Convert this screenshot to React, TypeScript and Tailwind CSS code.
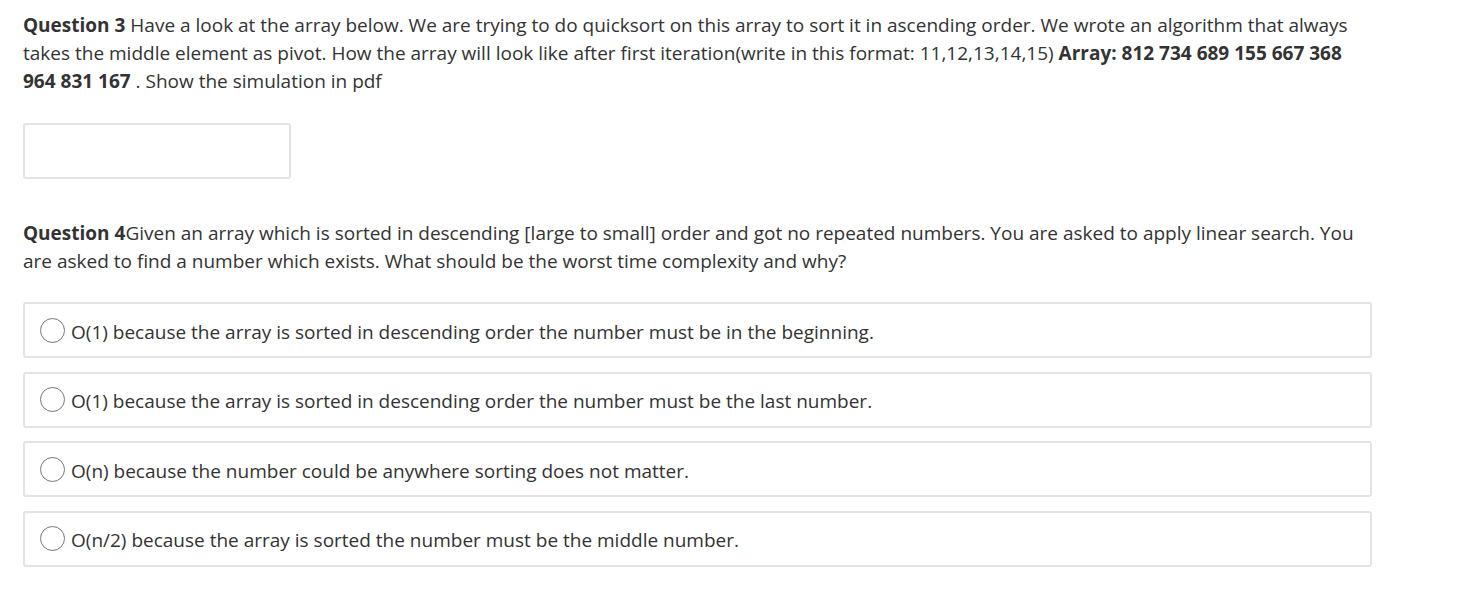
import React from 'react';

const options = [
  'O(1) because the array is sorted in descending order the number must be in the beginning.',
  'O(1) because the array is sorted in descending order the number must be the last number.',
  'O(n) because the number could be anywhere sorting does not matter.',
  'O(n/2) because the array is sorted the number must be the middle number.',
];

export default function App() {
  return (
    <div
      className="min-h-screen bg-white text-[#333] text-[19px] leading-[28px]"
      style={{ fontFamily: '"Open Sans", "Noto Sans", sans-serif' }}
    >
      <div className="w-[1349px] pl-[23px] pt-[11px] box-content">
        {/* Question 3 */}
        <p>
          <b>Question 3</b> Have a look at the array below. We are trying to do quicksort on this array to sort it in
          ascending order. We wrote an algorithm that always takes the middle element as pivot. How the array will look
          like after first iteration(write in this format: 11,12,13,14,15) <b>Array: 812 734 689 155 667 368 964 831 167</b> . Show
          the simulation in pdf
        </p>
        <div className="mt-[28px] w-[268px] h-[56px] border-2 border-[#e4e4e4] rounded-[3px]" />

        {/* Question 4 */}
        <p className="mt-[40px]">
          <b>Question 4</b>Given an array which is sorted in descending [large to small] order and got no repeated
          numbers. You are asked to apply linear search. You are asked to find a number which exists. What should be the
          worst time complexity and why?
        </p>
        <div className="mt-[27px] flex flex-col gap-[13.5px]">
          {options.map(o => (
            <label
              key={o}
              className="flex items-center h-[56px] border-2 border-[#e4e4e4] rounded-[3px] pl-[15px]"
            >
              <span className="w-[25px] h-[25px] rounded-full border-[1.5px] border-[#777] bg-white shrink-0" />
              <span className="ml-[6px] pt-[3px]">{o}</span>
            </label>
          ))}
        </div>
      </div>
    </div>
  );
}
